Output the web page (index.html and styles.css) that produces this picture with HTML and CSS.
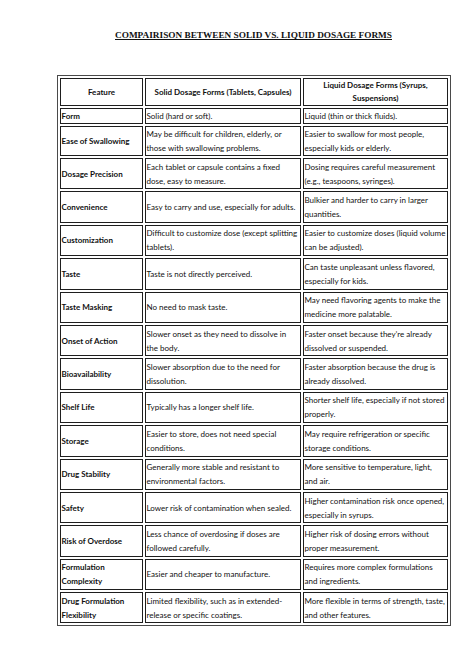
FILE: index.html
```html
<!DOCTYPE html>
<html lang="en">
<head>
<meta charset="utf-8">
<title>Comparison between solid vs. liquid dosage forms</title>
<link rel="stylesheet" href="styles.css">
</head>
<body>
<main class="page">
  <h1 class="title">COMPAIRISON BETWEEN SOLID VS. LIQUID DOSAGE FORMS</h1>
  <table class="grid">
    <colgroup>
      <col class="c1"><col class="c2"><col class="c3">
    </colgroup>
    <thead>
      <tr class="head">
        <th>Feature</th>
        <th>Solid Dosage Forms (Tablets, Capsules)</th>
        <th>Liquid Dosage Forms (Syrups,<br>Suspensions)</th>
      </tr>
    </thead>
    <tbody>
      <tr class="single">
        <td class="feat">Form</td>
        <td>Solid (hard or soft).</td>
        <td>Liquid (thin or thick fluids).</td>
      </tr>
      <tr class="short">
        <td class="feat">Ease of Swallowing</td>
        <td>May be difficult for children, elderly, or<br>those with swallowing problems.</td>
        <td>Easier to swallow for most people,<br>especially kids or elderly.</td>
      </tr>
      <tr>
        <td class="feat">Dosage Precision</td>
        <td>Each tablet or capsule contains a fixed<br>dose, easy to measure.</td>
        <td>Dosing requires careful measurement<br>(e.g., teaspoons, syringes).</td>
      </tr>
      <tr>
        <td class="feat">Convenience</td>
        <td>Easy to carry and use, especially for adults.</td>
        <td>Bulkier and harder to carry in larger<br>quantities.</td>
      </tr>
      <tr>
        <td class="feat">Customization</td>
        <td>Difficult to customize dose (except splitting<br>tablets).</td>
        <td>Easier to customize doses (liquid volume<br>can be adjusted).</td>
      </tr>
      <tr>
        <td class="feat">Taste</td>
        <td>Taste is not directly perceived.</td>
        <td>Can taste unpleasant unless flavored,<br>especially for kids.</td>
      </tr>
      <tr>
        <td class="feat">Taste Masking</td>
        <td>No need to mask taste.</td>
        <td>May need flavoring agents to make the<br>medicine more palatable.</td>
      </tr>
      <tr>
        <td class="feat">Onset of Action</td>
        <td>Slower onset as they need to dissolve in<br>the body.</td>
        <td>Faster onset because they’re already<br>dissolved or suspended.</td>
      </tr>
      <tr>
        <td class="feat">Bioavailability</td>
        <td>Slower absorption due to the need for<br>dissolution.</td>
        <td>Faster absorption because the drug is<br>already dissolved.</td>
      </tr>
      <tr>
        <td class="feat">Shelf Life</td>
        <td>Typically has a longer shelf life.</td>
        <td>Shorter shelf life, especially if not stored<br>properly.</td>
      </tr>
      <tr>
        <td class="feat">Storage</td>
        <td>Easier to store, does not need special<br>conditions.</td>
        <td>May require refrigeration or specific<br>storage conditions.</td>
      </tr>
      <tr>
        <td class="feat">Drug Stability</td>
        <td>Generally more stable and resistant to<br>environmental factors.</td>
        <td>More sensitive to temperature, light,<br>and air.</td>
      </tr>
      <tr>
        <td class="feat">Safety</td>
        <td>Lower risk of contamination when sealed.</td>
        <td>Higher contamination risk once opened,<br>especially in syrups.</td>
      </tr>
      <tr>
        <td class="feat">Risk of Overdose</td>
        <td>Less chance of overdosing if doses are<br>followed carefully.</td>
        <td>Higher risk of dosing errors without<br>proper measurement.</td>
      </tr>
      <tr>
        <td class="feat">Formulation<br>Complexity</td>
        <td>Easier and cheaper to manufacture.</td>
        <td>Requires more complex formulations<br>and ingredients.</td>
      </tr>
      <tr>
        <td class="feat">Drug Formulation<br>Flexibility</td>
        <td>Limited flexibility, such as in extended-<br>release or specific coatings.</td>
        <td>More flexible in terms of strength, taste,<br>and other features.</td>
      </tr>
    </tbody>
  </table>
</main>
</body>
</html>
```
FILE: styles.css
```css
html, body {
  margin: 0;
  padding: 0;
  background: #ffffff;
}

.page {
  width: 393px;
  margin-left: 57px;
  padding-top: 30px;
  color: #111111;
}

.title {
  margin: 0 0 34px 0;
  font-family: "Liberation Serif", "Times New Roman", serif;
  font-size: 9.25px;
  line-height: 11px;
  font-weight: bold;
  text-align: center;
  text-decoration: underline;
  text-underline-offset: 1px;
}

.grid {
  width: 393px;
  table-layout: fixed;
  border-collapse: separate;
  border-spacing: 2px;
  border: 1.5px solid #4a4a4a;
  font-family: Lato, "Noto Sans", sans-serif;
  font-size: 8px;
  line-height: 14px;
}

.c1 { width: 83px; }
.c2 { width: 156px; }
.c3 { width: 145px; }

.grid th,
.grid td {
  box-sizing: border-box;
  height: 31.4px;
  border: 1px solid #1e1e1e;
  padding: 0 1px 0 0.5px;
  vertical-align: middle;
  text-align: left;
  white-space: nowrap;
  overflow: hidden;
}

.grid .head th {
  height: 26px;
  font-weight: bold;
  text-align: center;
  line-height: 13px;
  padding: 0 1px;
}

.grid .single td {
  height: 16px;
}

.grid .short td {
  height: 30px;
}

.grid .feat {
  font-weight: bold;
}
```
